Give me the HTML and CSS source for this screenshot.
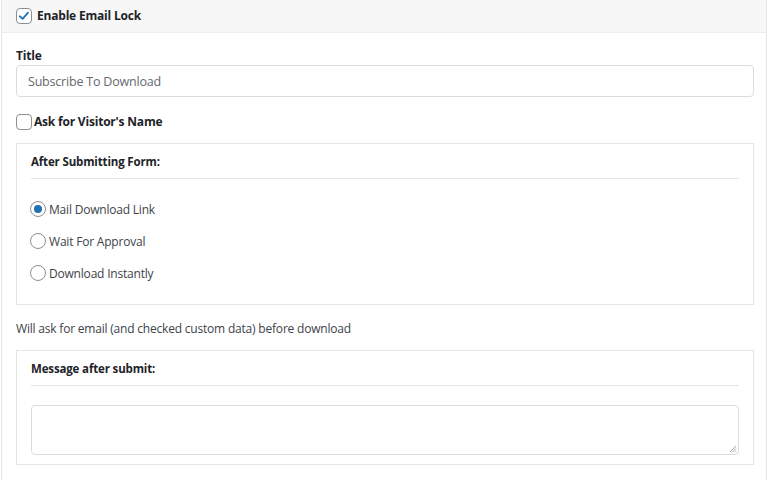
FILE: index.html
```html
<!DOCTYPE html>
<html>
<head>
<meta charset="utf-8">
<link rel="stylesheet" href="styles.css">
</head>
<body>
<div class="panel">
  <div class="panel-head">
    <label class="check-row">
      <span class="checkbox checked"><svg viewBox="0 0 16 16" width="14" height="14"><path d="M3.2 8.3 L6.4 11.3 L12.6 4.2" fill="none" stroke="#2271b1" stroke-width="2" stroke-linecap="round" stroke-linejoin="round"/></svg></span>
      <span class="strong">Enable Email Lock</span>
    </label>
  </div>
  <div class="panel-body">
    <div class="field-label">Title</div>
    <div class="text-input">Subscribe To Download</div>
    <label class="check-row visitor">
      <span class="checkbox"></span>
      <span class="strong">Ask for Visitor's Name</span>
    </label>
    <div class="box">
      <div class="box-head">After Submitting Form:</div>
      <div class="radios">
        <div class="radio-row"><span class="radio checked"></span><span>Mail Download Link</span></div>
        <div class="radio-row"><span class="radio"></span><span>Wait For Approval</span></div>
        <div class="radio-row"><span class="radio"></span><span>Download Instantly</span></div>
      </div>
    </div>
    <p class="note">Will ask for email (and checked custom data) before download</p>
    <div class="box box-msg">
      <div class="box-head">Message after submit:</div>
      <div class="textarea"><svg class="grip" viewBox="0 0 10 10" width="9" height="9"><path d="M9 2 L2 9 M9 5 L5 9 M9 8 L8 9" stroke="#999" stroke-width="1" fill="none"/></svg></div>
    </div>
  </div>
</div>
</body>
</html>
```

FILE: styles.css
```css
* { box-sizing: border-box; }
html, body { margin: 0; padding: 0; background: #fff; }
body {
  font-family: "Segoe UI", "Open Sans", "Noto Sans", sans-serif;
  font-size: 12px;
  letter-spacing: -0.2px;
  color: #3c434a;
}
.panel {
  margin-left: 1px;
  width: 766px;
  border: 1px solid #e5e5e5;
  border-top: none;
  min-height: 490px;
}
.panel-head {
  height: 33px;
  background: #f7f7f7;
  border-bottom: 1px solid #ececec;
  padding-left: 14px;
  display: flex;
  align-items: center;
}
.check-row {
  display: flex;
  align-items: center;
  gap: 2px;
}
.panel-head .check-row { gap: 5px; margin-top: -1px; }
.checkbox {
  width: 16px;
  height: 16px;
  border: 1px solid #8c8f94;
  border-radius: 4px;
  background: #fff;
  display: inline-flex;
  align-items: center;
  justify-content: center;
  flex: none;
}
.strong {
  font-weight: 700;
  color: #1d2327;
  font-size: 12px;
}
.panel-body {
  padding: 13px 12px 0 14px;
}
.field-label {
  font-weight: 700;
  color: #1d2327;
  line-height: 18px;
  margin-top: 1px;
}
.text-input {
  height: 32px;
  border: 1px solid #dcdcde;
  border-radius: 4px;
  padding: 0 11px;
  display: flex;
  align-items: center;
  color: #646970;
  font-size: 12.5px;
}
.visitor {
  margin-top: 16px;
}
.box {
  margin-top: 13px;
  border: 1px solid #e5e5e5;
  padding: 0 14px;
}
.box-head {
  font-weight: 700;
  color: #1d2327;
  font-size: 11.5px;
  letter-spacing: -0.15px;
  height: 35px;
  padding-top: 10px;
  border-bottom: 1px solid #e5e5e5;
}
.radios {
  padding: 21px 0 22px;
  display: flex;
  flex-direction: column;
  gap: 14px;
}
.radio-row {
  display: flex;
  align-items: center;
  gap: 3px;
  height: 18px;
  margin-left: -1px;
}
.radio {
  width: 16px;
  height: 16px;
  border: 1px solid #8c8f94;
  border-radius: 50%;
  background: #fff;
  display: inline-flex;
  align-items: center;
  justify-content: center;
  flex: none;
}
.radio.checked::after {
  content: "";
  width: 8px;
  height: 8px;
  border-radius: 50%;
  background: #2271b1;
}
.note {
  margin: 15px 0 0;
  line-height: 18px;
}
.box-msg {
  margin-top: 12px;
  padding-bottom: 9px;
}
.box-msg .textarea {
  margin-top: 19px;
  height: 50px;
  border: 1px solid #dcdcde;
  border-radius: 4px;
  position: relative;
}
.grip {
  position: absolute;
  right: 1px;
  bottom: 1px;
}
```
